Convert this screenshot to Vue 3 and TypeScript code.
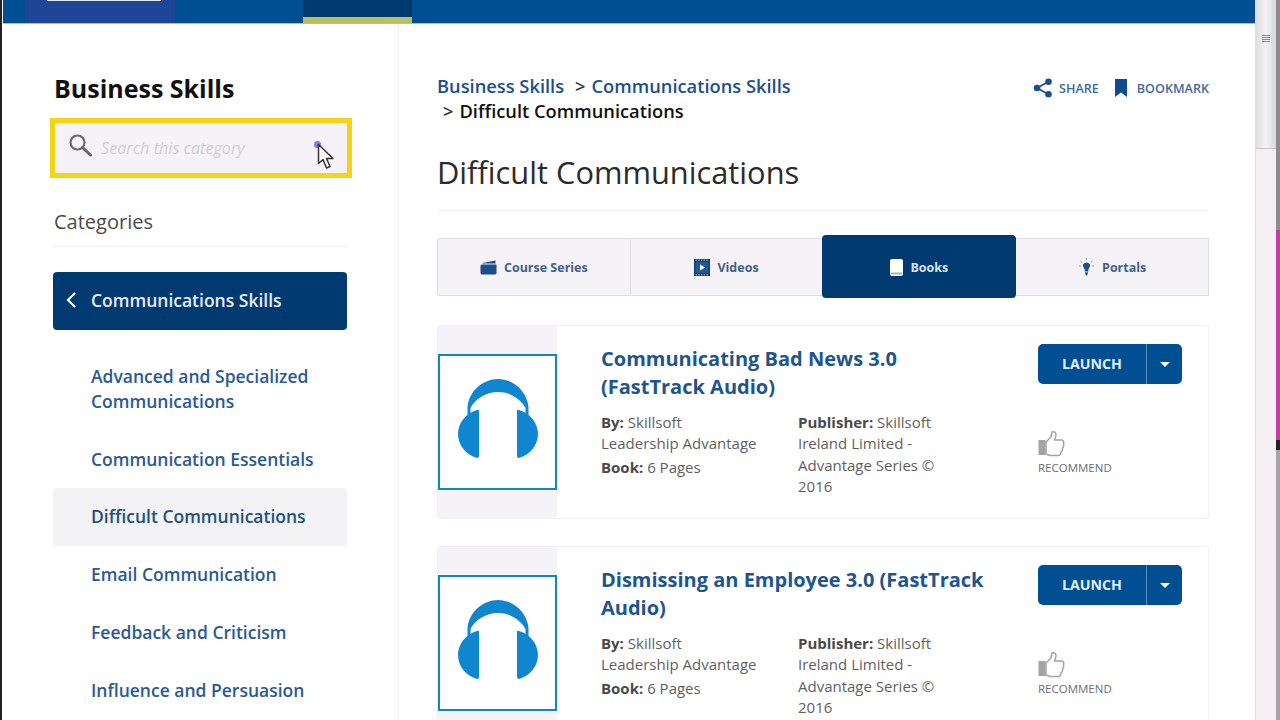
<script setup lang="ts">
interface Book {
  title: string
}

const subCategories = [
  'Advanced and Specialized Communications',
  'Communication Essentials',
  'Difficult Communications',
  'Email Communication',
  'Feedback and Criticism',
  'Influence and Persuasion',
]

const tabs = [
  { label: 'Course Series', icon: 'series' },
  { label: 'Videos', icon: 'video' },
  { label: 'Books', icon: 'book' },
  { label: 'Portals', icon: 'bulb' },
]

const publisherLines = ['Ireland Limited -', 'Advantage Series ©', '2016']

const books: Book[] = [
  { title: 'Communicating Bad News 3.0 (FastTrack Audio)' },
  { title: 'Dismissing an Employee 3.0 (FastTrack Audio)' },
]
</script>

<template>
  <div class="screen">
    <div class="edge"></div>
    <div class="page">
      <header class="topbar">
        <div class="brand"><span class="brand-logo"></span></div>
        <div class="nav-active"></div>
      </header>

      <div class="content">
        <aside class="sidebar">
          <h2 class="side-title">Business Skills</h2>
          <div class="search">
            <svg class="search-icon" viewBox="0 0 24 24" width="24" height="24">
              <circle cx="9.5" cy="9.5" r="7" fill="none" stroke="#666" stroke-width="2.1" />
              <path d="M14.5 14.5 L22.5 22" stroke="#666" stroke-width="3" stroke-linecap="round" />
            </svg>
            <span class="search-text">Search this category</span>
            <span class="click-dot"></span>
            <svg class="cursor" viewBox="0 0 18 27" width="18" height="27">
              <path d="M1.5 1.5 L1.5 20.5 L6 16.5 L9.5 25 L13 23.5 L9.5 15.5 L16 15.5 Z" fill="#fff" stroke="#333" stroke-width="1.5" stroke-linejoin="round" />
            </svg>
          </div>
          <h3 class="side-label">Categories</h3>
          <div class="current">
            <svg viewBox="0 0 12 18" width="12" height="18">
              <path d="M10 2 L3 9 L10 16" fill="none" stroke="#fff" stroke-width="2.2" />
            </svg>
            <span>Communications Skills</span>
          </div>
          <ul class="sub-list">
            <li
              v-for="item in subCategories"
              :key="item"
              :class="{ selected: item === 'Difficult Communications' }"
            >
              {{ item }}
            </li>
          </ul>
        </aside>

        <main class="main">
          <div class="crumb-row">
            <div class="crumbs">
              <div>
                <a>Business Skills</a><span class="sep">&gt;</span><a>Communications Skills</a>
              </div>
              <div class="crumb-current"><span class="sep first">&gt;</span>Difficult Communications</div>
            </div>
            <div class="actions">
              <span class="action">
                <svg viewBox="0 0 20 20" width="20" height="20">
                  <circle cx="4" cy="10" r="3.3" fill="#1b4f8a" />
                  <circle cx="15.5" cy="3.7" r="3.3" fill="#1b4f8a" />
                  <circle cx="15.5" cy="16.3" r="3.3" fill="#1b4f8a" />
                  <path d="M15.5 3.7 L4 10 L15.5 16.3" fill="none" stroke="#1b4f8a" stroke-width="1.8" />
                </svg>
                SHARE
              </span>
              <span class="action">
                <svg viewBox="0 0 14 20" width="14" height="20">
                  <path d="M1 1 H13 V19 L7 14.5 L1 19 Z" fill="#0f4c8f" />
                </svg>
                BOOKMARK
              </span>
            </div>
          </div>

          <h1 class="heading">Difficult Communications</h1>

          <nav class="tabs">
            <div
              v-for="tab in tabs"
              :key="tab.label"
              class="tab"
              :class="{ active: tab.label === 'Books' }"
            >
              <svg v-if="tab.icon === 'series'" viewBox="0 0 17 15" width="17" height="15">
                <path d="M2.5 3 L15.5 0.5 V3.5 H2.5 Z" fill="#1b4f8a" />
                <path d="M0.5 6 Q0.5 4.5 2 4.5 H16.5 V13 Q16.5 14.5 15 14.5 H2 Q0.5 14.5 0.5 13 Z" fill="#1b4f8a" />
              </svg>
              <svg v-else-if="tab.icon === 'video'" viewBox="0 0 16 17" width="16" height="17">
                <rect width="16" height="17" fill="#173f6e" />
                <path d="M1.5 1.2 H14.5 M1.5 15.8 H14.5" stroke="#a9bdd4" stroke-width="1" stroke-dasharray="1.5 1.2" />
                <rect x="1.5" y="3" width="13" height="11" fill="#1f5a99" />
                <path d="M6 5.5 L11 8.5 L6 11.5 Z" fill="#fff" />
              </svg>
              <svg v-else-if="tab.icon === 'book'" viewBox="0 0 13 17" width="13" height="17">
                <rect width="13" height="17" rx="2" fill="#fff" />
                <rect x="1" y="13.5" width="11" height="2" fill="#9fb4cc" />
              </svg>
              <svg v-else viewBox="0 0 17 18" width="17" height="18">
                <path d="M4.8 6.8 Q8.5 2.4 12.2 6.8 Q12 9.5 10.3 11.5 V13.5 H6.7 V11.5 Q5 9.5 4.8 6.8 Z" fill="#1b4f8a" />
                <path d="M7 14.2 H10 L9.2 17.5 H7.8 Z" fill="#1b4f8a" />
                <path d="M8.5 0 V2 M2.5 3 L4 4.2 M14.5 3 L13 4.2 M1 8 H3 M14 8 H16" stroke="#8fa0b5" stroke-width="1" />
              </svg>
              <span>{{ tab.label }}</span>
            </div>
          </nav>

          <article v-for="book in books" :key="book.title" class="card">
            <div class="thumb-col">
              <div class="thumb">
                <svg viewBox="0 0 80 80" width="80" height="80">
                  <path d="M9.5 36 V28 C11 12 25 0 40 0 C55 0 69 12 70.5 28 V36 H67.5 V29 C63 20 52 13 40 13 C28 13 17 20 12.5 29 V36 Z" fill="#0f86cf" />
                  <path d="M21 32 V77 Q21 79 19 79 C8 76 0 66 0 55 C0 44 8 34 19 31 Q21 30 21 32 Z" fill="#0f86cf" />
                  <path d="M59 32 V77 Q59 79 61 79 C72 76 80 66 80 55 C80 44 72 34 61 31 Q59 30 59 32 Z" fill="#0f86cf" />
                </svg>
              </div>
            </div>
            <div class="info">
              <h4 class="book-title">{{ book.title }}</h4>
              <div class="meta">
                <div class="meta-left">
                  <p><b>By:</b> Skillsoft</p>
                  <p>Leadership Advantage</p>
                  <p class="pages"><b>Book:</b> 6 Pages</p>
                </div>
                <div class="meta-right">
                  <p><b>Publisher:</b> Skillsoft</p>
                  <p v-for="line in publisherLines" :key="line">{{ line }}</p>
                </div>
              </div>
            </div>
            <div class="card-actions">
              <div class="launch">
                <span class="launch-main">LAUNCH</span>
                <span class="launch-more"><i></i></span>
              </div>
              <div class="recommend">
                <svg viewBox="0 0 27 26" width="27" height="26">
                  <rect x="0.5" y="9" width="7" height="15" fill="#a4a4a4" />
                  <path d="M8 11 L13 6 L14 1 Q17 0 18 3 Q18 6 16.5 9 H24 Q26.5 10 25.5 13 Q26 16 24.5 17 Q25 20 23 21 Q23 24 20.5 24.5 H12 L8 23 Z" fill="#fff" stroke="#a4a4a4" stroke-width="1.5" stroke-linejoin="round" />
                </svg>
                <span>RECOMMEND</span>
              </div>
            </div>
          </article>
        </main>
      </div>
    </div>
    <div class="scrollbar">
      <div class="thumb-bar">
        <span></span><span></span><span></span><span></span>
      </div>
    </div>
    <div class="desktop"></div>
  </div>
</template>

<style scoped>
.screen {
  display: flex;
  width: 1280px;
  height: 720px;
  overflow: hidden;
  background: #fff;
  font-family: "Open Sans", "Noto Sans", sans-serif;
  color: #555;
}
.edge {
  width: 2px;
  background: #222;
  flex: none;
}
.page {
  width: 1253px;
  flex: none;
  display: flex;
  flex-direction: column;
  padding-left: 1px;
  box-sizing: border-box;
}
.topbar {
  height: 23px;
  flex: none;
  display: flex;
  background: #004f93;
  box-shadow: 0 1px 0 #8fc4e6;
  position: relative;
}
.brand {
  width: 150px;
  margin-left: 22px;
  background: #1f4597;
}
.brand-logo {
  display: block;
  width: 114px;
  height: 1px;
  margin-left: 22px;
  background: #dfe6f3;
}
.nav-active {
  width: 109px;
  margin-left: 128px;
  background: #003a70;
  border-bottom: 6px solid #b8bf5f;
  box-sizing: border-box;
}
.content {
  display: flex;
  flex: 1;
  min-height: 0;
}
.sidebar {
  width: 396px;
  flex: none;
  box-sizing: border-box;
  border-right: 1px solid #f2f0f4;
  padding: 0 50px 0 51px;
}
.side-title {
  margin: 47px 0 0;
  font-size: 25px;
  line-height: 36px;
  font-weight: 700;
  color: #111;
}
.search {
  position: relative;
  display: flex;
  align-items: center;
  height: 60px;
  width: 302px;
  margin: 12px 0 0 -4px;
  box-sizing: border-box;
  border: 5px solid #f6d415;
  background: #f5f3f8;
  padding-left: 13px;
}
.search-icon {
  margin-top: -6px;
}
.search-text {
  margin-left: 9px;
  font-size: 16.2px;
  font-style: italic;
  color: #d0cfd3;
}
.click-dot {
  position: absolute;
  left: 259px;
  top: 18px;
  width: 7px;
  height: 7px;
  border-radius: 50%;
  background: #7d7de6;
}
.cursor {
  position: absolute;
  left: 262px;
  top: 20px;
}
.side-label {
  margin: 29px 0 0;
  font-size: 20px;
  line-height: 30px;
  font-weight: 400;
  color: #4a4a4a;
  padding-bottom: 9px;
  border-bottom: 1px solid #f2f0f4;
}
.current {
  display: flex;
  align-items: center;
  gap: 14px;
  height: 58px;
  margin: 25px 1px 0 -1px;
  padding: 0 0 2px 12px;
  box-sizing: border-box;
  background: #003a70;
  border-radius: 4px;
  color: #e8eef5;
  font-size: 17.5px;
  font-weight: 600;
}
.sub-list {
  list-style: none;
  margin: 17.5px 1px 0 -1px;
  padding: 0;
}
.sub-list li {
  padding: 16.4px 20px 16.4px 38px;
  font-size: 17.5px;
  line-height: 25px;
  font-weight: 600;
  color: #2a5a94;
  border-radius: 4px;
}
.sub-list li.selected {
  background: #f3f2f5;
  color: #23507f;
}
.main {
  flex: 1;
  min-width: 0;
  padding: 0 46px 0 38px;
}
.crumb-row {
  display: flex;
  justify-content: space-between;
  margin-top: 50px;
}
.crumbs {
  font-size: 18.3px;
  line-height: 25px;
  font-weight: 600;
  color: #1d4f8c;
}
.sep {
  margin: 0 6px 0 11px;
  color: #333;
}
.sep.first {
  margin-left: 6px;
}
.crumb-current {
  color: #111;
}
.actions {
  display: flex;
  gap: 15px;
  margin-top: 5px;
}
.action {
  display: flex;
  align-items: center;
  gap: 6px;
  height: 20px;
  font-size: 12.6px;
  font-weight: 600;
  color: #3f6a9c;
}
.action:last-child {
  gap: 9px;
}
.heading {
  margin: 27px 0 0;
  padding-bottom: 16px;
  border-bottom: 1px solid #f2f0f4;
  font-size: 30.8px;
  line-height: 44px;
  font-weight: 400;
  color: #2b2b2b;
}
.tabs {
  display: flex;
  align-items: center;
  margin-top: 24px;
  height: 63px;
}
.tab {
  flex: 1;
  height: 58px;
  display: flex;
  align-items: center;
  justify-content: center;
  gap: 7px;
  box-sizing: border-box;
  padding-top: 1px;
  background: #f5f3f8;
  border: 1px solid #dedde2;
  border-left-width: 0;
  font-size: 12.5px;
  font-weight: 700;
  color: #3d6288;
}
.tab:first-child {
  border-left-width: 1px;
  border-radius: 2px 0 0 2px;
}
.tab.active {
  flex: 0 0 194px;
  height: 63px;
  margin-left: -1px;
  background: #003a70;
  border: none;
  border-radius: 4px;
  color: #d7e1ec;
}
.card {
  display: flex;
  height: 194px;
  margin-top: 27px;
  box-sizing: border-box;
  border: 1px solid #f0eff3;
  border-radius: 3px;
}
.thumb-col {
  width: 119px;
  flex: none;
  display: flex;
  align-items: center;
  background: #f5f3f8;
}
.thumb {
  width: 119px;
  height: 136px;
  box-sizing: border-box;
  border: 2px solid #0f86c8;
  background: #fff;
  display: flex;
  justify-content: center;
  padding-top: 23px;
}
.info {
  width: 437px;
  flex: none;
  box-sizing: border-box;
  padding: 19px 0 0 44px;
}
.book-title {
  margin: 0;
  width: 392px;
  font-size: 20px;
  line-height: 28px;
  font-weight: 700;
  color: #1c5590;
}
.meta {
  display: flex;
  margin-top: 11px;
  font-size: 15px;
  line-height: 21.25px;
  color: #5f5f5f;
}
.meta p {
  margin: 0;
}
.meta b {
  color: #4a4a4a;
}
.meta-left {
  width: 197px;
  flex: none;
}
.meta-left .pages {
  margin-top: 2px;
}
.meta-right {
  width: 145px;
}
.card-actions {
  flex: 1;
  padding: 18px 0 0 44px;
}
.launch {
  display: flex;
  width: 144px;
  height: 40px;
  border-radius: 5px;
  overflow: hidden;
  background: #004f93;
  color: #e4edf6;
  font-size: 14.2px;
  font-weight: 700;
}
.launch-main {
  width: 109px;
  display: flex;
  align-items: center;
  justify-content: center;
  padding-bottom: 2px;
  box-sizing: border-box;
  border-right: 1px solid #5a8ebd;
}
.launch-more {
  flex: 1;
  display: flex;
  align-items: center;
  justify-content: center;
}
.launch-more i {
  border: 5px solid transparent;
  border-top-color: #fff;
  border-bottom-width: 0;
}
.recommend {
  display: flex;
  flex-direction: column;
  align-items: flex-start;
  gap: 3px;
  margin-top: 47px;
  font-size: 11.5px;
  line-height: 16px;
  color: #6d6d6d;
}
.scrollbar {
  width: 21px;
  flex: none;
  background: #f3eff3;
  border-left: 1px solid #e3d9e0;
  box-sizing: border-box;
}
.thumb-bar {
  height: 149px;
  background: linear-gradient(90deg, #dfdde0, #f3f2f4 50%, #d9d8da);
  border-bottom: 1px solid #c5c4c7;
  display: flex;
  flex-direction: column;
  align-items: center;
  justify-content: center;
  gap: 1px;
  padding-bottom: 71px;
  box-sizing: border-box;
}
.thumb-bar span {
  width: 8px;
  height: 1px;
  background: #8a8a8a;
}
.desktop {
  flex: 1;
  background: linear-gradient(180deg, #8f8a8f 0, #8f8a8f 230px, #c63ba6 230px, #c63ba6 440px, #222 440px, #222 450px, #a9a2a4 450px);
}
</style>
